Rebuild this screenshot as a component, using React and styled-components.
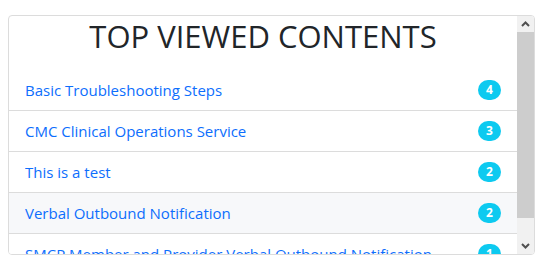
import React from 'react';
import styled, { createGlobalStyle } from 'styled-components';

const GlobalStyle = createGlobalStyle`
  html, body {
    margin: 0;
    padding: 0;
    background: #fff;
  }
  body {
    font-family: "Open Sans", "Noto Sans", sans-serif;
    color: #212529;
  }
`

const Page = styled.div`
  padding: 15px 13px 0 8px;
`

const Card = styled.section`
  box-sizing: border-box;
  display: flex;
  width: 527px;
  height: 240px;
  border: 1px solid #dcdcdc;
  border-radius: 4px;
  overflow: hidden;
`

const Content = styled.div`
  flex: 1;
  min-width: 0;
  overflow: hidden;
`

const ScrollBar = styled.div`
  flex: none;
  width: 17px;
  display: flex;
  flex-direction: column;
  background: #f1f1f1;
`

const ScrollButton = styled.div`
  flex: none;
  height: 16px;
  display: flex;
  align-items: center;
  justify-content: center;
  background: #f1f1f1;
`

const Thumb = styled.div`
  flex: none;
  height: 186px;
  background: #cdcdcd;
`

const Track = styled.div`
  flex: 1;
`

const Title = styled.h1`
  margin: 0;
  padding: 1px 0 15px;
  font-size: 31px;
  font-weight: 400;
  line-height: 38px;
  text-align: center;
  color: #212529;
`

const List = styled.ul`
  list-style: none;
  margin: 0;
  padding: 0;
`

const Item = styled.li`
  display: flex;
  align-items: center;
  justify-content: space-between;
  gap: 12px;
  padding: 8px 16px;
  line-height: 24px;
  font-size: 15px;
  border-bottom: 1px solid #dcdcdc;
  background: ${p => (p.$active ? '#f7f8fa' : '#fff')};
`

const Link = styled.a`
  color: #0d6efd;
  text-decoration: none;
  white-space: nowrap;
  overflow: hidden;
`

const Badge = styled.span`
  flex: none;
  display: inline-block;
  min-width: 23px;
  height: 20px;
  box-sizing: border-box;
  padding: 0 7px;
  border-radius: 10px;
  background: #0dcaf0;
  color: #fff;
  font-size: 12px;
  font-weight: 700;
  line-height: 20px;
  text-align: center;
`

const Arrow = ({ up }) => (
  <svg width="9" height="6" viewBox="0 0 9 6">
    <path
      d={up ? 'M1 5 L4.5 1.5 L8 5' : 'M1 1 L4.5 4.5 L8 1'}
      fill="none"
      stroke="#505050"
      strokeWidth="2"
    />
  </svg>
)

const items = [
  { title: 'Basic Troubleshooting Steps', count: 4 },
  { title: 'CMC Clinical Operations Service', count: 3 },
  { title: 'This is a test', count: 2 },
  { title: 'Verbal Outbound Notification', count: 2, active: true },
  { title: 'SMCP Member and Provider Verbal Outbound Notification', count: 1 },
]

export default function App() {
  return (
    <Page>
      <GlobalStyle />
      <Card>
        <Content>
          <Title>TOP VIEWED CONTENTS</Title>
          <List>
            {items.map(item => (
              <Item key={item.title} $active={item.active}>
                <Link href="#">{item.title}</Link>
                <Badge>{item.count}</Badge>
              </Item>
            ))}
          </List>
        </Content>
        <ScrollBar>
          <ScrollButton><Arrow up /></ScrollButton>
          <Thumb />
          <Track />
          <ScrollButton><Arrow /></ScrollButton>
        </ScrollBar>
      </Card>
    </Page>
  )
}
